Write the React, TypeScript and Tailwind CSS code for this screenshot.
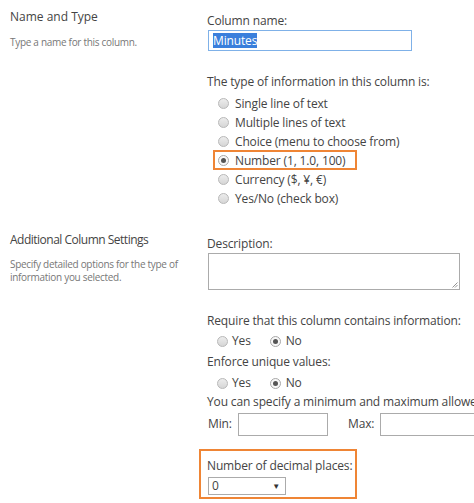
import React from "react";

const ORANGE = "border-[#ef8535]";

function Radio({ checked }: { checked?: boolean }) {
  return (
    <span
      className={
        "flex h-[11px] w-[11px] shrink-0 items-center justify-center rounded-full border " +
        (checked
          ? "border-[#a8a8a8] bg-[#f7f7f7]"
          : "border-[#b8b8b8] bg-gradient-to-b from-[#ececec] to-[#d6d6d6]")
      }
    >
      {checked && <span className="h-[5px] w-[5px] rounded-full bg-[#555]" />}
    </span>
  );
}

function ListRadio({ label, checked, boxed }: { label: string; checked?: boolean; boxed?: boolean }) {
  return (
    <div className="relative flex h-[19px] items-center pl-[11px]">
      <Radio checked={checked} />
      <span className="ml-[6px] whitespace-nowrap">{label}</span>
      {boxed && (
        <span className={"pointer-events-none absolute left-[6px] top-[-1px] h-[20px] w-[144px] border-2 " + ORANGE} />
      )}
    </div>
  );
}

function YesNo() {
  return (
    <div className="flex h-[20px] items-center pl-[10px]">
      <Radio />
      <span className="ml-[4px]">Yes</span>
      <span className="ml-[19px]">
        <Radio checked />
      </span>
      <span className="ml-[5px]">No</span>
    </div>
  );
}

export default function App() {
  return (
    <div
      className="relative h-[503px] w-[474px] overflow-hidden bg-white text-[12px] leading-[18px] tracking-[-0.15px] text-[#444]"
      style={{ fontFamily: '"Open Sans", "Noto Sans", sans-serif' }}
    >
      {/* Section 1 */}
      <div className="flex">
        <div className="w-[207px] shrink-0 pl-[10px] pt-[8px]">
          <div className="text-[12px] leading-[18px] tracking-[0px] text-[#444]">Name and Type</div>
          <div className="mt-[9px] text-[10px] leading-[14px] tracking-[-0.3px] text-[#777]">
            Type a name for this column.
          </div>
        </div>
        <div className="pb-[23px] pt-[12px]">
          <div>Column name:</div>
          <div className="ml-[1px] flex h-[21px] w-[204px] items-center border border-[#7fb1e8] pl-[4px]">
            <span className="bg-[#3a7fdc] text-[12px] leading-[15px] text-white">Minutes</span>
          </div>
          <div className="mt-[22px] whitespace-nowrap">The type of information in this column is:</div>
          <div className="mt-[3px]">
            <ListRadio label="Single line of text" />
            <ListRadio label="Multiple lines of text" />
            <ListRadio label="Choice (menu to choose from)" />
            <ListRadio label="Number (1, 1.0, 100)" checked boxed />
            <ListRadio label="Currency ($, ¥, €)" />
            <ListRadio label="Yes/No (check box)" />
          </div>
        </div>
      </div>

      {/* Section 2 */}
      <div className="flex">
        <div className="w-[207px] shrink-0 pl-[10px]">
          <div className="whitespace-nowrap tracking-[-0.5px]">Additional Column Settings</div>
          <div className="mt-[9px] whitespace-nowrap text-[10px] leading-[13px] tracking-[-0.3px] text-[#777]">
            Specify detailed options for the type of
            <br />
            information you selected.
          </div>
        </div>
        <div className="pt-[4px]">
          <div>Description:</div>
          <div className="relative ml-[1px] h-[37px] w-[252px] border border-[#ababab]">
            <svg className="absolute bottom-[1px] right-[1px]" width="7" height="7" viewBox="0 0 7 7">
              <path d="M6.5 1.5 L1.5 6.5 M6.5 4 L4 6.5" stroke="#888" strokeWidth="0.9" fill="none" />
            </svg>
          </div>
          <div className="mt-[22px] whitespace-nowrap">Require that this column contains information:</div>
          <div className="mt-[1px]">
            <YesNo />
          </div>
          <div className="mt-[2px]">Enforce unique values:</div>
          <div className="mt-[2px]">
            <YesNo />
          </div>
          <div className="whitespace-nowrap">You can specify a minimum and maximum allowed value:</div>
          <div className="mt-[1px] flex h-[24px] items-center pl-[1px]">
            <span className="w-[30px]">Min:</span>
            <span className="h-[23px] w-[90px] border border-[#ababab]" />
            <span className="ml-[20px] w-[32px]">Max:</span>
            <span className="h-[23px] w-[110px] shrink-0 border border-[#ababab]" />
          </div>
          <div className={"-ml-[8px] mt-[13px] h-[50px] w-[158px] border-2 pl-[6px] pt-[6px] " + ORANGE}>
            <div className="whitespace-nowrap">Number of decimal places:</div>
            <div className="ml-[1px] mt-[2px] flex h-[18px] w-[78px] items-center justify-between border border-[#ababab] pl-[3px] pr-[5px]">
              <span className="leading-[16px]">0</span>
              <span className="text-[8px] leading-[8px] text-[#333]">▼</span>
            </div>
          </div>
        </div>
      </div>
    </div>
  );
}
